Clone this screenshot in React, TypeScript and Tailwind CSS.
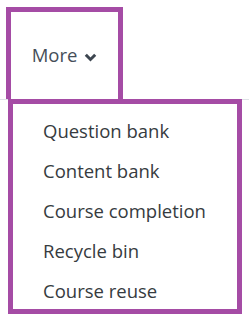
const items = ["Question bank", "Content bank", "Course completion", "Recycle bin", "Course reuse"]

export default function App() {
  return (
    <div className="relative h-[325px] w-[249px] overflow-hidden bg-white pl-[6px] pt-[7px] font-['Open_Sans',sans-serif]">
      <div className="absolute left-0 top-[99px] h-px w-full bg-[#dee2e6]" />
      <div className="relative flex h-[92px] w-[117px] items-center justify-center border-x-[5px] border-t-[5px] border-[#a54ca5] pt-0">
        <span className="text-[18.5px] leading-none text-[#454e59]">More</span>
        <svg className="ml-[7px] mt-[3px]" width="13" height="9" viewBox="0 0 13 9">
          <polyline points="1.8,1.8 6.5,6.5 11.2,1.8" fill="none" stroke="#3d4650" strokeWidth="3" />
        </svg>
      </div>
      <div className="relative ml-[2px] h-[215px] w-[234px] border-[5px] border-[#a54ca5] bg-white pl-[30px] pt-[7px]">
        {items.map((t) => (
          <div key={t} className="h-[40px] text-[18.5px] leading-[40px] text-[#363b40]">
            {t}
          </div>
        ))}
      </div>
    </div>
  )
}
